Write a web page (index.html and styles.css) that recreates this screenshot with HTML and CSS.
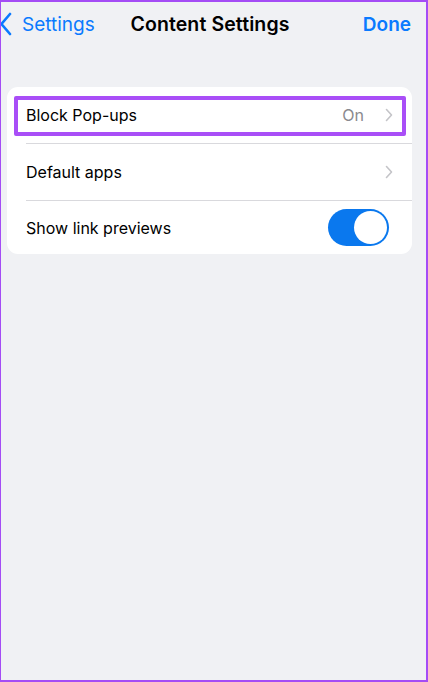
FILE: index.html
```html
<!DOCTYPE html>
<html lang="en">
<head>
    <meta charset="UTF-8">
    <title>Content Settings</title>
    <link rel="stylesheet" href="styles.css">
</head>
<body>

<div class="screen">
    <div class="nav-bar">
        <a class="back-link" href="#">
            <svg class="back-icon" width="12" height="24" viewBox="0 0 12 24">
                <path d="M10 2 L1.5 12 L10 22" fill="none" stroke="#0a7aff" stroke-width="2.6" stroke-linecap="round" stroke-linejoin="round"/>
            </svg>
            <span>Settings</span>
        </a>
        <h1 class="nav-title">Content Settings</h1>
        <a class="done-link" href="#">Done</a>
    </div>

    <div class="group">
        <div class="row row-first">
            <span class="row-label">Block Pop-ups</span>
            <span class="row-value">On</span>
            <svg class="chevron" width="8" height="14" viewBox="0 0 8 14">
                <path d="M1.5 1.5 L6.5 7 L1.5 12.5" fill="none" stroke="#c4c4c8" stroke-width="1.6" stroke-linecap="round" stroke-linejoin="round"/>
            </svg>
            <div class="highlight"></div>
        </div>
        <div class="row">
            <span class="row-label">Default apps</span>
            <svg class="chevron" width="8" height="14" viewBox="0 0 8 14">
                <path d="M1.5 1.5 L6.5 7 L1.5 12.5" fill="none" stroke="#c4c4c8" stroke-width="1.6" stroke-linecap="round" stroke-linejoin="round"/>
            </svg>
        </div>
        <div class="row row-last">
            <span class="row-label">Show link previews</span>
            <span class="toggle on"><span class="knob"></span></span>
        </div>
    </div>
</div>

</body>
</html>
```

FILE: styles.css
```css
* {
    box-sizing: border-box;
}

body {
    margin: 0;
    font-family: Inter, "Noto Sans", sans-serif;
    color: #000;
}

.screen {
    width: 428px;
    height: 682px;
    border: 2px solid #a44cf5;
    border-left-width: 1px;
    background: #f0f1f4;
    overflow: hidden;
}

/* nav bar */
.nav-bar {
    display: grid;
    grid-template-columns: 1fr auto 1fr;
    align-items: center;
    height: 44px;
    padding-right: 15px;
}

.back-link {
    display: flex;
    align-items: center;
    gap: 10px;
    color: #0a7aff;
    text-decoration: none;
    font-size: 19px;
    margin-left: -1px;
}

.nav-title {
    margin: 0 0 0 8px;
    font-size: 19.5px;
    font-weight: 600;
    letter-spacing: 0.1px;
}

.done-link {
    justify-self: end;
    color: #0a7aff;
    text-decoration: none;
    font-size: 19px;
    font-weight: 600;
}

/* settings group */
.group {
    margin: 41px 14px 0 6px;
    background: #fff;
    border-radius: 11px;
}

.row {
    position: relative;
    display: flex;
    align-items: center;
    height: 57px;
    margin-left: 19px;
    padding-right: 19px;
    border-bottom: 1px solid #d9d9dd;
    font-size: 16px;
}

.row-last {
    height: 53px;
    border-bottom: none;
    padding-right: 23px;
}

.row-label {
    flex: 1;
}

.row-value {
    color: #8a8a8e;
    margin-right: 21px;
}

.chevron {
    display: block;
}

.toggle {
    position: relative;
    width: 61px;
    height: 37px;
    border-radius: 19px;
    background: #0a78ee;
}

.toggle .knob {
    position: absolute;
    top: 2px;
    right: 2px;
    width: 33px;
    height: 33px;
    border-radius: 50%;
    background: #fff;
}

/* annotation over the first row */
.highlight {
    position: absolute;
    left: -12px;
    right: 6px;
    top: 9px;
    height: 40px;
    border: 4px solid #a94ef7;
    border-radius: 2px;
}
```
